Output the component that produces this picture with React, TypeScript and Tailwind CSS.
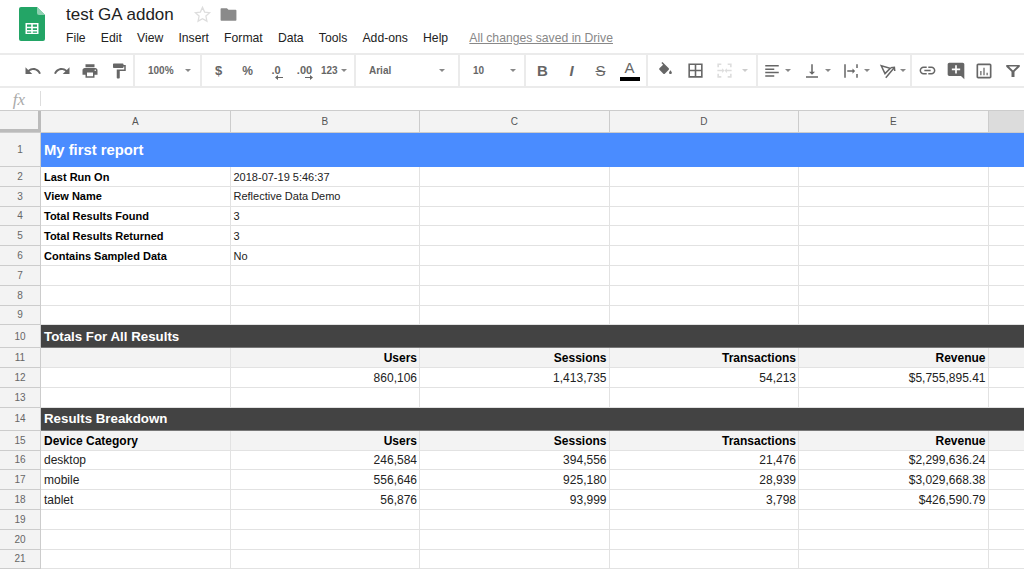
import React from 'react';

const font = "font-['Liberation_Sans',Arial,sans-serif]";

const Icon = ({ d, size = 18, className = 'text-[#666]' }: { d: string; size?: number; className?: string }) => (
  <svg viewBox="0 0 24 24" width={size} height={size} className={className} fill="currentColor">
    <path d={d} />
  </svg>
);

const Caret = ({ light }: { light?: boolean }) => (
  <span className={`block w-0 h-0 border-x-[3px] border-x-transparent border-t-[3px] ${light ? 'border-t-[#ccc]' : 'border-t-[#888]'}`} />
);

const ICONS = {
  undo: 'M12.5 8c-2.65 0-5.05.99-6.9 2.6L2 7v9h9l-3.62-3.62c1.39-1.16 3.16-1.88 5.12-1.88 3.54 0 6.55 2.31 7.6 5.5l2.37-.78C21.08 11.03 17.15 8 12.5 8z',
  redo: 'M18.4 10.6C16.55 8.99 14.15 8 11.5 8c-4.65 0-8.58 3.03-9.97 7.22L3.9 16c1.05-3.19 4.05-5.5 7.6-5.5 1.95 0 3.73.72 5.12 1.88L13 16h9V7l-3.6 3.6z',
  print: 'M19 8H5c-1.66 0-3 1.34-3 3v6h4v4h12v-4h4v-6c0-1.66-1.34-3-3-3zm-3 11H8v-5h8v5zm3-7c-.55 0-1-.45-1-1s.45-1 1-1 1 .45 1 1-.45 1-1 1zm-1-9H6v4h12V3z',
  paint: 'M18 4V3c0-.55-.45-1-1-1H5c-.55 0-1 .45-1 1v4c0 .55.45 1 1 1h12c.55 0 1-.45 1-1V6h1v4H9v11c0 .55.45 1 1 1h2c.55 0 1-.45 1-1v-9h8V4h-3z',
  fill: 'M16.56 8.94L7.62 0 6.21 1.41l2.38 2.38-5.15 5.15c-.59.59-.59 1.54 0 2.12l5.5 5.5c.29.29.68.44 1.06.44s.77-.15 1.06-.44l5.5-5.5c.59-.58.59-1.53 0-2.12zM19 11.5s-2 2.17-2 3.5c0 1.1.9 2 2 2s2-.9 2-2c0-1.33-2-3.5-2-3.5z',
  borders: 'M3 3v18h18V3H3zm8 16H5v-6h6v6zm0-8H5V5h6v6zm8 8h-6v-6h6v6zm0-8h-6V5h6v6z',
  merge: 'M3 3h5v2H5v3H3V3zm13 0h5v5h-2V5h-3V3zM3 16h2v3h3v2H3v-5zm16 0h2v5h-5v-2h3v-3zM3 11h6V9l3 3-3 3v-2H3v-2zm18 0v2h-6v2l-3-3 3-3v2h6z',
  align: 'M3 4h18v2H3V4zm0 4.5h12v2H3v-2zM3 13h18v2H3v-2zm0 4.5h12v2H3v-2z',
  valign: 'M16 13h-3V3h-2v10H8l4 4 4-4zM4 19v2h16v-2H4z',
  wrap: 'M3 3h2v18H3V3zm16 0h2v5h-2V3zm0 13h2v5h-2v-5zM7 11h7V8.5l3.5 3.5-3.5 3.5V13H7v-2z',
  link: 'M3.9 12c0-1.71 1.39-3.1 3.1-3.1h4V7H7c-2.76 0-5 2.24-5 5s2.24 5 5 5h4v-1.9H7c-1.71 0-3.1-1.39-3.1-3.1zM8 13h8v-2H8v2zm9-6h-4v1.9h4c1.71 0 3.1 1.39 3.1 3.1s-1.39 3.1-3.1 3.1h-4V17h4c2.76 0 5-2.24 5-5s-2.24-5-5-5z',
  comment: 'M21.99 4c0-1.1-.89-2-1.99-2H4c-1.1 0-2 .9-2 2v12c0 1.1.9 2 2 2h14l4 4-.01-18zM17 11h-4v4h-2v-4H7V9h4V5h2v4h4v2z',
  chart: 'M19 3H5c-1.1 0-2 .9-2 2v14c0 1.1.9 2 2 2h14c1.1 0 2-.9 2-2V5c0-1.1-.9-2-2-2zm0 16H5V5h14v14zM9 17H7.5v-5H9v5zm3.75 0h-1.5V8h1.5v9zM16.5 17H15v-3h1.5v3z',
  filter: 'M3 4h18v2.2L14 13v7h-4v-7L3 6.2V4zm3.6 2l5.4 5.4L17.4 6H6.6z',
};

const Slot = ({ w, children }: { w: number; children?: React.ReactNode }) => (
  <div style={{ width: w }} className="flex items-center justify-center shrink-0">{children}</div>
);

const Sep = () => <div className="w-[2px] h-full bg-[#ebebeb] shrink-0" />;

const ToolText = ({ children, className = '' }: { children: React.ReactNode; className?: string }) => (
  <span className={`text-[#666] leading-none ${className}`}>{children}</span>
);

const DecimalArrow = ({ right, className }: { right?: boolean; className: string }) => (
  <svg viewBox="0 0 8 5" width={8} height={5} className={`absolute top-[12px] ${className}`} fill="#666">
    <path d={right ? 'M0 2h5V0l3 2.5L5 5V3H0z' : 'M8 2H3V0L0 2.5 3 5V3h5z'} />
  </svg>
);

const RotateIcon = () => (
  <svg viewBox="0 0 24 24" width={18} height={18} fill="none" stroke="#666" strokeWidth="2">
    <path d="M3 5l12 3.5-7 7z" />
    <path d="M9 21L20 8" />
    <path d="M15.5 7.5l5-.5.5 5" />
  </svg>
);

const Toolbar = () => (
  <div className="h-[35px] flex items-center border-y-2 border-[#ebebeb] text-[10px] font-bold">
    <div className="w-[133px] h-full flex items-center pl-[19px] shrink-0">
      <Slot w={28.5}><Icon d={ICONS.undo} /></Slot>
      <Slot w={28.5}><Icon d={ICONS.redo} /></Slot>
      <Slot w={28.5}><Icon d={ICONS.print} /></Slot>
      <Slot w={28.5}><Icon d={ICONS.paint} /></Slot>
    </div>
    <Sep />
    <div className="w-[65px] h-full flex items-center justify-between pl-[13px] pr-[9px] shrink-0">
      <ToolText>100%</ToolText>
      <Caret />
    </div>
    <Sep />
    <div className="w-[152px] h-full flex items-center pl-[2px] shrink-0">
      <Slot w={29}><ToolText className="text-[13px]">$</ToolText></Slot>
      <Slot w={29}><ToolText className="text-[12px]">%</ToolText></Slot>
      <Slot w={28}>
        <span className="relative">
          <ToolText className="text-[11px]">.0</ToolText>
          <DecimalArrow className="left-[4px]" />
        </span>
      </Slot>
      <Slot w={29}>
        <span className="relative">
          <ToolText className="text-[11px]">.00</ToolText>
          <DecimalArrow right className="left-[8px]" />
        </span>
      </Slot>
      <div className="flex items-center gap-[3px] pl-[2px]">
        <ToolText>123</ToolText>
        <Caret />
      </div>
    </div>
    <Sep />
    <div className="w-[102px] h-full flex items-center justify-between pl-[13px] pr-[13px] shrink-0">
      <ToolText>Arial</ToolText>
      <Caret />
    </div>
    <Sep />
    <div className="w-[64px] h-full flex items-center justify-between pl-[13px] pr-[8px] shrink-0">
      <ToolText>10</ToolText>
      <Caret />
    </div>
    <Sep />
    <div className="w-[120px] h-full flex items-center pl-[2px] shrink-0">
      <Slot w={29}><ToolText className="text-[15px]">B</ToolText></Slot>
      <Slot w={29}><ToolText className="text-[15px] italic">I</ToolText></Slot>
      <Slot w={29}><ToolText className="text-[15px] line-through font-normal">S</ToolText></Slot>
      <Slot w={29}>
        <div className="flex flex-col items-center">
          <ToolText className="text-[15px] font-normal">A</ToolText>
          <div className="w-[20px] h-[4px] bg-black mt-[2px]" />
        </div>
      </Slot>
    </div>
    <Sep />
    <div className="w-[108px] h-full flex items-center pl-[3px] shrink-0">
      <Slot w={29}><Icon d={ICONS.fill} size={17} /></Slot>
      <Slot w={30}><Icon d={ICONS.borders} size={19} /></Slot>
      <Slot w={29}><Icon d={ICONS.merge} size={19} className="text-[#ddd]" /></Slot>
      <Slot w={12}><Caret light /></Slot>
    </div>
    <Sep />
    <div className="w-[152px] h-full flex items-center pl-[4px] shrink-0">
      <Slot w={20}><Icon d={ICONS.align} /></Slot>
      <Slot w={12}><Caret /></Slot>
      <Slot w={9} />
      <Slot w={18}><Icon d={ICONS.valign} /></Slot>
      <Slot w={14}><Caret /></Slot>
      <Slot w={7} />
      <Slot w={18}><Icon d={ICONS.wrap} /></Slot>
      <Slot w={14}><Caret /></Slot>
      <Slot w={4} />
      <Slot w={19}><RotateIcon /></Slot>
      <Slot w={12}><Caret /></Slot>
    </div>
    <Sep />
    <div className="h-full flex items-center pl-[1px] shrink-0">
      <Slot w={28}><Icon d={ICONS.link} size={19} /></Slot>
      <Slot w={29}><Icon d={ICONS.comment} size={20} /></Slot>
      <Slot w={28}><Icon d={ICONS.chart} size={20} /></Slot>
      <Slot w={29}><Icon d={ICONS.filter} size={18} /></Slot>
    </div>
  </div>
);

const Logo = () => (
  <svg viewBox="0 0 26 34" width={26} height={34}>
    <path d="M2 0h16l8 8v24a2 2 0 0 1-2 2H2a2 2 0 0 1-2-2V2a2 2 0 0 1 2-2z" fill="#23a566" />
    <path d="M18 0l8 8h-6a2 2 0 0 1-2-2z" fill="#8ed1b1" />
    <path d="M6.5 16h13v11h-13z" fill="#fff" />
    <path d="M8 17.5h4.2v2.2H8zm5.8 0H18v2.2h-4.2zM8 21.2h4.2v1.9H8zm5.8 0H18v1.9h-4.2zM8 24.4h4.2v1.4H8zm5.8 0H18v1.4h-4.2z" fill="#23a566" />
  </svg>
);

const MENU = ['File', 'Edit', 'View', 'Insert', 'Format', 'Data', 'Tools', 'Add-ons', 'Help'];

const Header = () => (
  <div className="h-[53px] flex">
    <div className="w-[66px] pl-[19px] pt-[7px] shrink-0"><Logo /></div>
    <div className="flex flex-col">
      <div className="h-[29px] flex items-center">
        <span className="text-[17px] text-[#222] leading-none">test GA addon</span>
        <svg viewBox="0 0 24 24" width={19} height={19} className="ml-[19px]" fill="none" stroke="#ddd" strokeWidth="1.6">
          <path d="M12 3l2.7 6 6.3.7-4.7 4.3 1.3 6.4-5.6-3.2-5.6 3.2L7.7 14 3 9.7 9.3 9z" />
        </svg>
        <svg viewBox="0 0 24 24" width={19} height={19} className="ml-[7px]" fill="#8a8a8a">
          <path d="M10 4H3a1 1 0 0 0-1 1v14a1 1 0 0 0 1 1h18a1 1 0 0 0 1-1V7a1 1 0 0 0-1-1H12l-2-2z" />
        </svg>
      </div>
      <div className="flex items-center gap-[15.2px] text-[12.2px] text-[#222] leading-[18px]">
        {MENU.map((m) => <span key={m}>{m}</span>)}
        <span className="ml-[6px] text-[#888] underline">All changes saved in Drive</span>
      </div>
    </div>
  </div>
);

const FormulaBar = () => (
  <div className="h-[22px] flex items-start pt-[3px]">
    <span className="w-[38px] text-center font-['Liberation_Serif',serif] italic text-[17px] leading-none text-[#aaa]">fx</span>
    <div className="w-px h-[15px] ml-[2px] bg-[#ddd]" />
  </div>
);

const COLS = ['A', 'B', 'C', 'D', 'E'];

const ColumnHeader = () => (
  <div className="h-[23px] flex border-y border-[#ccc] bg-[#f3f3f3] text-[10px] text-[#555]">
    <div className="w-[41px] shrink-0 border-r-[3px] border-b-[3px] border-[#bbb]" />
    {COLS.map((c) => (
      <div key={c} className="w-[189.5px] shrink-0 flex items-center justify-center border-r border-[#ccc]">{c}</div>
    ))}
    <div className="flex-1 bg-[#dcdcdc]" />
  </div>
);

const RowNum = ({ n }: { n: number }) => (
  <div className="w-[41px] shrink-0 flex items-center justify-center bg-[#f3f3f3] border-r border-b border-[#ccc] text-[10px] font-normal text-[#666]">{n}</div>
);

type Kind = 'plain' | 'info' | 'head';

const Row = ({ n, cells = [], kind = 'plain' }: { n: number; cells?: string[]; kind?: Kind }) => (
  <div className={`h-[19.8px] flex ${kind === 'info' ? 'text-[11px]' : 'text-[12px]'} ${kind === 'head' ? 'bg-[#f3f3f3] font-bold text-black' : 'text-[#222]'}`}>
    <RowNum n={n} />
    {COLS.map((c, i) => (
      <div
        key={c}
        className={`w-[189.5px] shrink-0 flex items-center pt-[1px] pl-[3px] pr-[2px] border-r border-b border-[#e2e2e2] ${i > 0 && kind !== 'info' ? 'justify-end' : ''} ${kind === 'info' && i === 0 ? 'font-bold text-black' : ''}`}
      >
        {cells[i]}
      </div>
    ))}
    <div className="flex-1 border-b border-[#e2e2e2]" />
  </div>
);

const Banner = ({ n, text }: { n: number; text: string }) => (
  <div className="h-[23px] flex">
    <RowNum n={n} />
    <div className="flex-1 flex items-center pt-[1px] px-[3px] bg-[#434343] border-b border-[#777] text-white font-bold text-[13.3px]">{text}</div>
  </div>
);

const App = () => (
  <div className={`w-[1024px] h-[570px] overflow-hidden bg-white ${font}`}>
    <Header />
    <Toolbar />
    <FormulaBar />
    <ColumnHeader />
    <div className="h-[34px] flex">
      <RowNum n={1} />
      <div className="flex-1 flex items-center pt-[1px] px-[3px] bg-[#4a8cff] text-white font-bold text-[14.8px]">My first report</div>
    </div>
    <Row n={2} kind="info" cells={['Last Run On', '2018-07-19 5:46:37']} />
    <Row n={3} kind="info" cells={['View Name', 'Reflective Data Demo']} />
    <Row n={4} kind="info" cells={['Total Results Found', '3']} />
    <Row n={5} kind="info" cells={['Total Results Returned', '3']} />
    <Row n={6} kind="info" cells={['Contains Sampled Data', 'No']} />
    <Row n={7} />
    <Row n={8} />
    <Row n={9} />
    <Banner n={10} text="Totals For All Results" />
    <Row n={11} kind="head" cells={['', 'Users', 'Sessions', 'Transactions', 'Revenue']} />
    <Row n={12} cells={['', '860,106', '1,413,735', '54,213', '$5,755,895.41']} />
    <Row n={13} />
    <Banner n={14} text="Results Breakdown" />
    <Row n={15} kind="head" cells={['Device Category', 'Users', 'Sessions', 'Transactions', 'Revenue']} />
    <Row n={16} cells={['desktop', '246,584', '394,556', '21,476', '$2,299,636.24']} />
    <Row n={17} cells={['mobile', '556,646', '925,180', '28,939', '$3,029,668.38']} />
    <Row n={18} cells={['tablet', '56,876', '93,999', '3,798', '$426,590.79']} />
    <Row n={19} />
    <Row n={20} />
    <Row n={21} />
  </div>
);

export default App;
